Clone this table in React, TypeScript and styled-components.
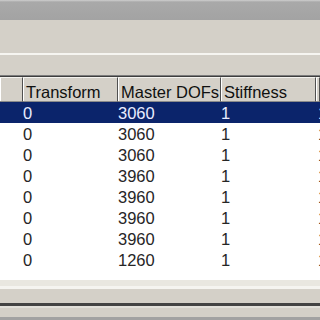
import React from 'react'
import styled, { createGlobalStyle } from 'styled-components'

const GlobalStyle = createGlobalStyle`
  html, body {
    margin: 0;
    padding: 0;
    background: #ffffff;
  }
  body {
    font-family: "Liberation Sans", Arial, sans-serif;
  }
`

const Window = styled.div`
  width: 320px;
  height: 320px;
  overflow: hidden;
  display: flex;
  flex-direction: column;
  background: #ffffff;
`
const TitleStrip = styled.div`
  height: 20px;
  flex-shrink: 0;
  background: linear-gradient(#cfcfcf 0px, #a9a9a9 2px, #a3a3a3 100%);
`
const Panel = styled.div<{ $h: number }>`
  height: ${props => props.$h}px;
  flex-shrink: 0;
  background: #d4d0c8;
`
const Line = styled.div<{ $h: number, $color: string }>`
  height: ${props => props.$h}px;
  flex-shrink: 0;
  background: ${props => props.$color};
`
const Grid = styled.div`
  display: grid;
  grid-template-columns: 23px 95px 103px 95px 1fr;
  flex-shrink: 0;
`
const HeaderCell = styled.div`
  height: 20px;
  padding-top: 3px;
  line-height: 23px;
  padding-left: 3px;
  font-size: 16.5px;
  color: #101010;
  white-space: nowrap;
  overflow: hidden;
  background: #d4d0c8;
  border-top: 1px solid #f4f3ef;
  border-bottom: 1px solid #8a8a8a;
  border-right: 1px solid #505050;
  box-shadow: inset 1px 0 #ffffff;
`
const Cell = styled.div<{ $selected: boolean, $indent?: number }>`
  height: 21px;
  line-height: 22px;
  padding-left: ${props => props.$indent || 0}px;
  font-size: 16.5px;
  white-space: nowrap;
  overflow: hidden;
  background: ${props => props.$selected ? '#0b246b' : '#ffffff'};
  color: ${props => props.$selected ? '#e8ecff' : '#262626'};
`
const Filler = styled.div`
  flex: 1;
  background: #ffffff;
`
const Footer = styled.div`
  height: 40px;
  flex-shrink: 0;
  display: flex;
  flex-direction: column;
`

const columns = ['', 'Transform', 'Master DOFs', 'Stiffness', '']

const rows = [
  ['0', '3060', '1'],
  ['0', '3060', '1'],
  ['0', '3060', '1'],
  ['0', '3960', '1'],
  ['0', '3960', '1'],
  ['0', '3960', '1'],
  ['0', '3960', '1'],
  ['0', '1260', '1']
]

function App () {
  return <Window>
    <GlobalStyle />
    <TitleStrip />
    <Panel $h={33} />
    <Line $h={2} $color='#f6f5f1' />
    <Panel $h={20} />
    <Line $h={1} $color='#7c7c7c' />
    <Line $h={1} $color='#3e3e3e' />
    <Grid>
      {columns.map((c, i) => <HeaderCell key={i}>{c}</HeaderCell>)}
      {rows.map((r, i) => <React.Fragment key={i}>
        <Cell $selected={i === 0} />
        <Cell $selected={i === 0}>{r[0]}</Cell>
        <Cell $selected={i === 0}>{r[1]}</Cell>
        <Cell $selected={i === 0}>{r[2]}</Cell>
        <Cell $selected={i === 0} $indent={2}>1</Cell>
      </React.Fragment>)}
    </Grid>
    <Filler />
    <Footer>
      <Line $h={6} $color='#e9e7e0' />
      <Line $h={3} $color='#f5f4f0' />
      <Line $h={14} $color='#d4d0c8' />
      <Line $h={3} $color='#434343' />
      <Line $h={2} $color='#e2e0da' />
      <Line $h={9} $color='#d4d0c8' />
      <Line $h={3} $color='#a2a2a2' />
    </Footer>
  </Window>
}

export default App
